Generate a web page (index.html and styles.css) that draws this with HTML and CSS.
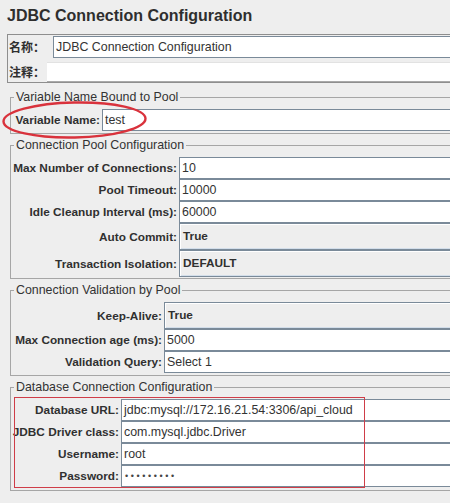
FILE: index.html
```html
<!DOCTYPE html>
<html lang="zh">
<head>
<meta charset="utf-8">
<title>JDBC Connection Configuration</title>
<link rel="stylesheet" href="styles.css">
</head>
<body>
<div class="page">
  <h1 class="title">JDBC Connection Configuration</h1>

  <div class="namebox">
    <div class="nrow">
      <span class="nlabel nlabel-name">名称：</span>
      <div class="field field-name">JDBC Connection Configuration</div>
    </div>
    <div class="nrow">
      <span class="nlabel nlabel-comment">注释：</span>
      <div class="field field-comment"></div>
    </div>
  </div>

  <fieldset class="group group-first g-var">
    <legend>Variable Name Bound to Pool</legend>
    <div class="grid">
      <label class="lbl">Variable Name:</label>
      <div class="field">test</div>
    </div>
  </fieldset>

  <fieldset class="group g-pool">
    <legend>Connection Pool Configuration</legend>
    <div class="grid">
      <label class="lbl">Max Number of Connections:</label>
      <div class="field">10</div>
      <label class="lbl">Pool Timeout:</label>
      <div class="field">10000</div>
      <label class="lbl">Idle Cleanup Interval (ms):</label>
      <div class="field">60000</div>
      <label class="lbl">Auto Commit:</label>
      <div class="combo">True</div>
      <label class="lbl">Transaction Isolation:</label>
      <div class="combo">DEFAULT</div>
    </div>
  </fieldset>

  <fieldset class="group g-valid">
    <legend>Connection Validation by Pool</legend>
    <div class="grid">
      <label class="lbl">Keep-Alive:</label>
      <div class="combo">True</div>
      <label class="lbl">Max Connection age (ms):</label>
      <div class="field">5000</div>
      <label class="lbl">Validation Query:</label>
      <div class="field">Select 1</div>
    </div>
  </fieldset>

  <fieldset class="group g-db">
    <legend>Database Connection Configuration</legend>
    <div class="grid">
      <label class="lbl">Database URL:</label>
      <div class="field">jdbc:mysql://172.16.21.54:3306/api_cloud</div>
      <label class="lbl">JDBC Driver class:</label>
      <div class="field">com.mysql.jdbc.Driver</div>
      <label class="lbl">Username:</label>
      <div class="field">root</div>
      <label class="lbl">Password:</label>
      <div class="field pwd">•••••••••</div>
    </div>
  </fieldset>

  <svg class="mark-ellipse" width="148" height="40" viewBox="0 0 148 40" aria-hidden="true">
    <ellipse cx="73.5" cy="20" rx="71" ry="17.5" fill="none" stroke="#d9323c" stroke-width="2.4" transform="rotate(-1.2 73.5 20)"/>
  </svg>
  <div class="mark-rect"></div>
</div>
</body>
</html>
```

FILE: styles.css
```css
html, body {
  margin: 0;
  padding: 0;
}

body {
  width: 450px;
  height: 503px;
  overflow: hidden;
  background: #eeeeee;
  color: #333333;
  font-family: "Liberation Sans", Arial, "Noto Sans CJK SC", sans-serif;
}

.page {
  position: relative;
  width: 520px;
  padding-left: 7px;
  box-sizing: border-box;
}

.title {
  margin: 0 0 7px;
  padding-top: 5px;
  font-size: 16px;
  line-height: 22px;
  font-weight: bold;
  color: #2e2e2e;
}

/* name / comment box */
.namebox {
  display: flex;
  flex-direction: column;
  gap: 4px;
  padding-top: 1px;
  border: 1px solid #8e8e8e;
  border-right: none;
}

.nrow {
  display: flex;
  align-items: center;
}

.nlabel {
  flex: none;
  padding-left: 1px;
  box-sizing: border-box;
  font-family: "Noto Sans CJK SC", "Liberation Sans", sans-serif;
  font-weight: bold;
  font-size: 12px;
  line-height: 16px;
  color: #2e2e2e;
}

.nlabel-name { width: 45px; }
.nlabel-comment { width: 39px; }

.field {
  flex: 1;
  min-width: 0;
  height: 22px;
  box-sizing: border-box;
  padding-left: 2px;
  background: #ffffff;
  border: 1px solid #7a8a99;
  font-size: 12.4px;
  line-height: 20px;
  white-space: nowrap;
  overflow: hidden;
  color: #333333;
}

.field-comment {
  height: 20px;
  border: none;
  border-top: 1px solid #e2e2e2;
  border-bottom: 1px solid #a9a9a9;
}

.pwd {
  font-size: 9px;
  letter-spacing: 2.6px;
  padding-left: 3px;
  color: #444444;
}

/* titled groups */
.group {
  margin: 4px 0 0 3px;
  padding: 5px 0 1px 3px;
  border: 1px solid #a6a6a6;
  border-right: none;
  min-width: 0;
}

.group-first {
  margin-top: 7px;
}

.group legend {
  padding: 0 2px;
  font-size: 12.4px;
  line-height: 14px;
  color: #333333;
}

.grid {
  display: grid;
  grid-template-columns: var(--lw) 1fr;
}

.g-var { --lw: 88px; padding-bottom: 2px; }
.g-pool { --lw: 165px; }
.g-valid { --lw: 150px; padding-bottom: 2px; }
.g-db { --lw: 107px; padding-bottom: 3px; }

.lbl {
  align-self: center;
  justify-self: end;
  padding-right: 2px;
  font-size: 11.8px;
  font-weight: bold;
  line-height: 14px;
  white-space: nowrap;
  color: #303030;
}

.combo {
  height: 27px;
  box-sizing: border-box;
  padding-left: 3px;
  background: #eeeeee;
  border: 1px solid #7a8a99;
  box-shadow: inset 1px 1px 0 #ffffff, inset -1px -1px 0 #d3deea;
  font-size: 11.8px;
  font-weight: bold;
  line-height: 25px;
  color: #303030;
}

/* annotation overlays */
.mark-ellipse {
  position: absolute;
  left: 1px;
  top: 100px;
}

.mark-rect {
  position: absolute;
  left: 14px;
  top: 397px;
  width: 351px;
  height: 91px;
  box-sizing: border-box;
  border: 1.5px solid #cf3d48;
}
```
